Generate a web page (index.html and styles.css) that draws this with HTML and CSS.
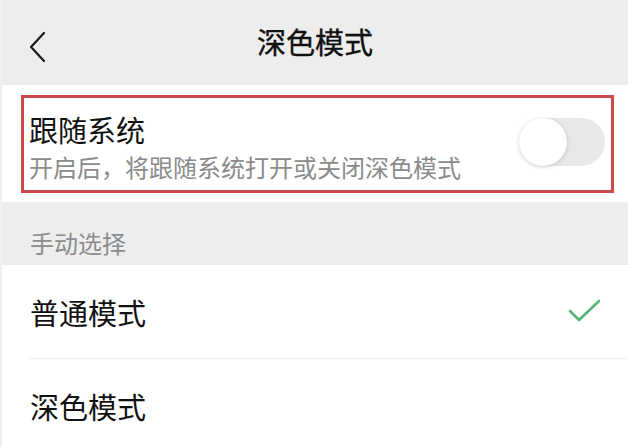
FILE: index.html
```html
<!DOCTYPE html>
<html lang="zh-CN">
<head>
<meta charset="utf-8">
<link rel="stylesheet" href="styles.css">
</head>
<body>
<div class="page">
  <header class="nav">
    <svg class="back" width="20" height="32" viewBox="0 0 20 32"><path d="M16 2 L3 16 L16 30" fill="none" stroke="#1a1a1a" stroke-width="2.2" stroke-linecap="round" stroke-linejoin="round"/></svg>
    <div class="title">深色模式</div>
  </header>
  <section class="follow">
    <div class="box">
      <div class="texts">
        <div class="main">跟随系统</div>
        <div class="sub">开启后，将跟随系统打开或关闭深色模式</div>
      </div>
      <div class="toggle"><div class="knob"></div></div>
    </div>
  </section>
  <div class="group">手动选择</div>
  <section class="list">
    <div class="item">
      <span>普通模式</span>
      <svg class="check" width="34" height="26" viewBox="0 0 34 26"><path d="M2 13 L11 22 L31 3" fill="none" stroke="#55b573" stroke-width="2.6" stroke-linecap="round" stroke-linejoin="round"/></svg>
    </div>
    <div class="item last"><span>深色模式</span></div>
  </section>
</div>
</body>
</html>
```
FILE: styles.css
```css
* { box-sizing: border-box; }
html, body { margin: 0; padding: 0; }
body {
  font-family: "Noto Sans CJK SC", "Noto Sans", sans-serif;
  background: #ffffff;
  width: 628px;
  height: 447px;
  overflow: hidden;
}
.page {
  border-left: 2px solid #f0f0f0;
  height: 447px;
}
.nav {
  height: 85px;
  background: #ededed;
  display: flex;
  align-items: center;
  justify-content: center;
  position: relative;
}
.back {
  position: absolute;
  left: 26px;
  top: 31px;
}
.title {
  font-size: 29px;
  font-weight: 400;
  color: #111;
  margin-top: -4px;
  -webkit-text-stroke: 0.4px #111;
}
.follow {
  height: 117px;
  padding: 10px 14px 0 19px;
  background: #fff;
}
.box {
  height: 98px;
  border: 3px solid #cc4a4c;
  display: flex;
  align-items: flex-start;
  justify-content: space-between;
  padding: 0 6px 0 5px;
}
.texts {
  display: flex;
  flex-direction: column;
  padding-top: 14px;
}
.main {
  font-size: 29px;
  color: #111;
  line-height: 34px;
}
.sub {
  font-size: 24px;
  color: #8a8a8a;
  line-height: 30px;
  margin-top: 6px;
}
.toggle {
  width: 86px;
  height: 48px;
  border-radius: 24px;
  background: #e8e8e8;
  position: relative;
  margin-top: 20px;
}
.knob {
  position: absolute;
  left: 0;
  top: 0;
  width: 48px;
  height: 48px;
  border-radius: 50%;
  background: #fff;
  box-shadow: 0 1px 4px rgba(0,0,0,0.18);
}
.group {
  height: 63px;
  background: #ededed;
  color: #8c8c8c;
  font-size: 24px;
  padding: 26px 0 0 28px;
  line-height: 30px;
}
.list { background: #fff; }
.item {
  height: 94px;
  margin-left: 26px;
  border-bottom: 1px solid #efefef;
  display: flex;
  align-items: center;
  justify-content: space-between;
  padding: 0 26px 0 2px;
  font-size: 29px;
  color: #111;
}
.item.last { border-bottom: none; }
.check { margin-top: -2px; }
```
